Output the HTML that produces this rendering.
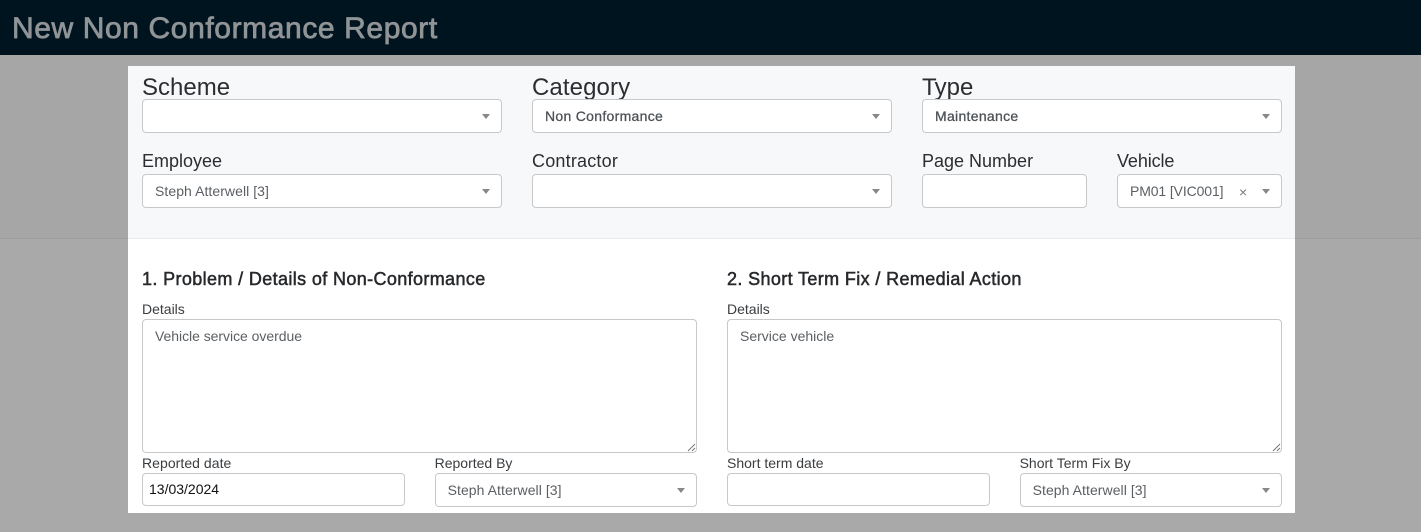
<!DOCTYPE html>
<html><head><meta charset="utf-8"><title>New Non Conformance Report</title>
<style>
html,body{margin:0;padding:0}
body{width:1421px;height:532px;overflow:hidden;position:relative;background:#a9a9a9;font-family:"Liberation Sans",Arial,sans-serif;color:#212529}
div{position:absolute;box-sizing:border-box;white-space:nowrap}
.top{left:0;top:55px;width:1421px;height:184px;background:#a5a6a5;border-bottom:1px solid #9c9d9c}
.hdr{left:0;top:0;width:1421px;height:55px;background:#00141f}
.title{left:12px;top:11px;font-size:30px;line-height:36px;color:#909497;-webkit-text-stroke:.75px #909497;letter-spacing:.6px}
.card{left:128px;top:66px;width:1167px;height:447px;background:#fff}
.band{left:128px;top:66px;width:1167px;height:173px;background:#f7f8fa;border-bottom:1px solid #e9eaec}
.l24{font-size:24px;line-height:29px;color:#2b2d30}
.l18{font-size:18px;line-height:22px;color:#2b2d30}
.l14{font-size:14px;line-height:17px;color:#3a3d40}
.h{font-size:18px;line-height:22px;color:#26282b;-webkit-text-stroke:.5px #26282b;letter-spacing:.37px}
.box{background:#fff;border:1px solid #c6c8ca;border-radius:4px}
.v{font-size:14px;line-height:17px;color:#5b5f63}
.m{color:#4d5257;-webkit-text-stroke:.3px #4d5257;letter-spacing:.3px}
.a{width:0;height:0;border-left:4px solid transparent;border-right:4px solid transparent;border-top:5px solid #888}
</style></head><body>
<div class="top"></div>
<div class="hdr"></div>
<div class="title">New Non Conformance Report</div>
<div class="card"></div>
<div class="band"></div>

<div class="l24" style="left:142px;top:73px">Scheme</div>
<div class="box" style="left:142px;top:99px;width:360px;height:34px"></div>
<div class="a" style="left:482px;top:114px"></div>

<div class="l24" style="left:532px;top:73px;letter-spacing:.1px">Category</div>
<div class="box" style="left:532px;top:99px;width:360px;height:34px"></div>
<div class="v m" style="left:545px;top:108px">Non Conformance</div>
<div class="a" style="left:872px;top:114px"></div>

<div class="l24" style="left:922px;top:73px"><span style="letter-spacing:-2px">T</span>ype</div>
<div class="box" style="left:922px;top:99px;width:360px;height:34px"></div>
<div class="v m" style="left:935px;top:108px">Maintenance</div>
<div class="a" style="left:1262px;top:114px"></div>

<div class="l18" style="left:142px;top:150px">Employee</div>
<div class="box" style="left:142px;top:174px;width:360px;height:34px"></div>
<div class="v" style="left:155px;top:183px;letter-spacing:.06px">Steph Atterwell [3]</div>
<div class="a" style="left:482px;top:189px"></div>

<div class="l18" style="left:532px;top:150px;letter-spacing:.2px">Contractor</div>
<div class="box" style="left:532px;top:174px;width:360px;height:34px"></div>
<div class="a" style="left:872px;top:189px"></div>

<div class="l18" style="left:922px;top:150px">Page Number</div>
<div class="box" style="left:922px;top:174px;width:165px;height:34px"></div>

<div class="l18" style="left:1117px;top:150px;letter-spacing:-.1px">Vehicle</div>
<div class="box" style="left:1117px;top:174px;width:165px;height:34px"></div>
<div class="v" style="left:1130px;top:183px;letter-spacing:-.12px">PM01 [VIC001]</div>
<div class="v" style="left:1239px;top:184px;color:#777">×</div>
<div class="a" style="left:1262px;top:189px"></div>

<div class="h" style="left:142px;top:268px">1. Problem / Details of Non-Conformance</div>
<div class="l14" style="left:142px;top:301px">Details</div>
<div class="box" style="left:142px;top:319px;width:555px;height:134px"></div>
<div class="v" style="left:155px;top:328px;letter-spacing:-.04px">Vehicle service overdue</div>
<svg style="position:absolute;left:687px;top:443px" width="9" height="9"><path d="M1 8L8 1M5 8L8 5" stroke="#777" stroke-width="1" fill="none"/></svg>

<div class="h" style="left:727px;top:268px">2. Short Term Fix / Remedial Action</div>
<div class="l14" style="left:727px;top:301px">Details</div>
<div class="box" style="left:727px;top:319px;width:555px;height:134px"></div>
<div class="v" style="left:740px;top:328px">Service vehicle</div>
<svg style="position:absolute;left:1272px;top:443px" width="9" height="9"><path d="M1 8L8 1M5 8L8 5" stroke="#777" stroke-width="1" fill="none"/></svg>

<div class="l14" style="left:142px;top:455px;letter-spacing:.05px">Reported date</div>
<div class="box" style="left:142px;top:473px;width:263px;height:33px"></div>
<div class="l14" style="left:149px;top:481px;color:#111">13/03/2024</div>

<div class="l14" style="left:434.6px;top:455px">Reported By</div>
<div class="box" style="left:435px;top:473px;width:262px;height:34px"></div>
<div class="v" style="left:447.6px;top:482px;letter-spacing:.06px">Steph Atterwell [3]</div>
<div class="a" style="left:677px;top:488px"></div>

<div class="l14" style="left:727px;top:455px">Short term date</div>
<div class="box" style="left:727px;top:473px;width:263px;height:33px"></div>

<div class="l14" style="left:1019.6px;top:455px">Short Term Fix By</div>
<div class="box" style="left:1020px;top:473px;width:262px;height:34px"></div>
<div class="v" style="left:1032.6px;top:482px;letter-spacing:.06px">Steph Atterwell [3]</div>
<div class="a" style="left:1262px;top:488px"></div>
</body></html>
